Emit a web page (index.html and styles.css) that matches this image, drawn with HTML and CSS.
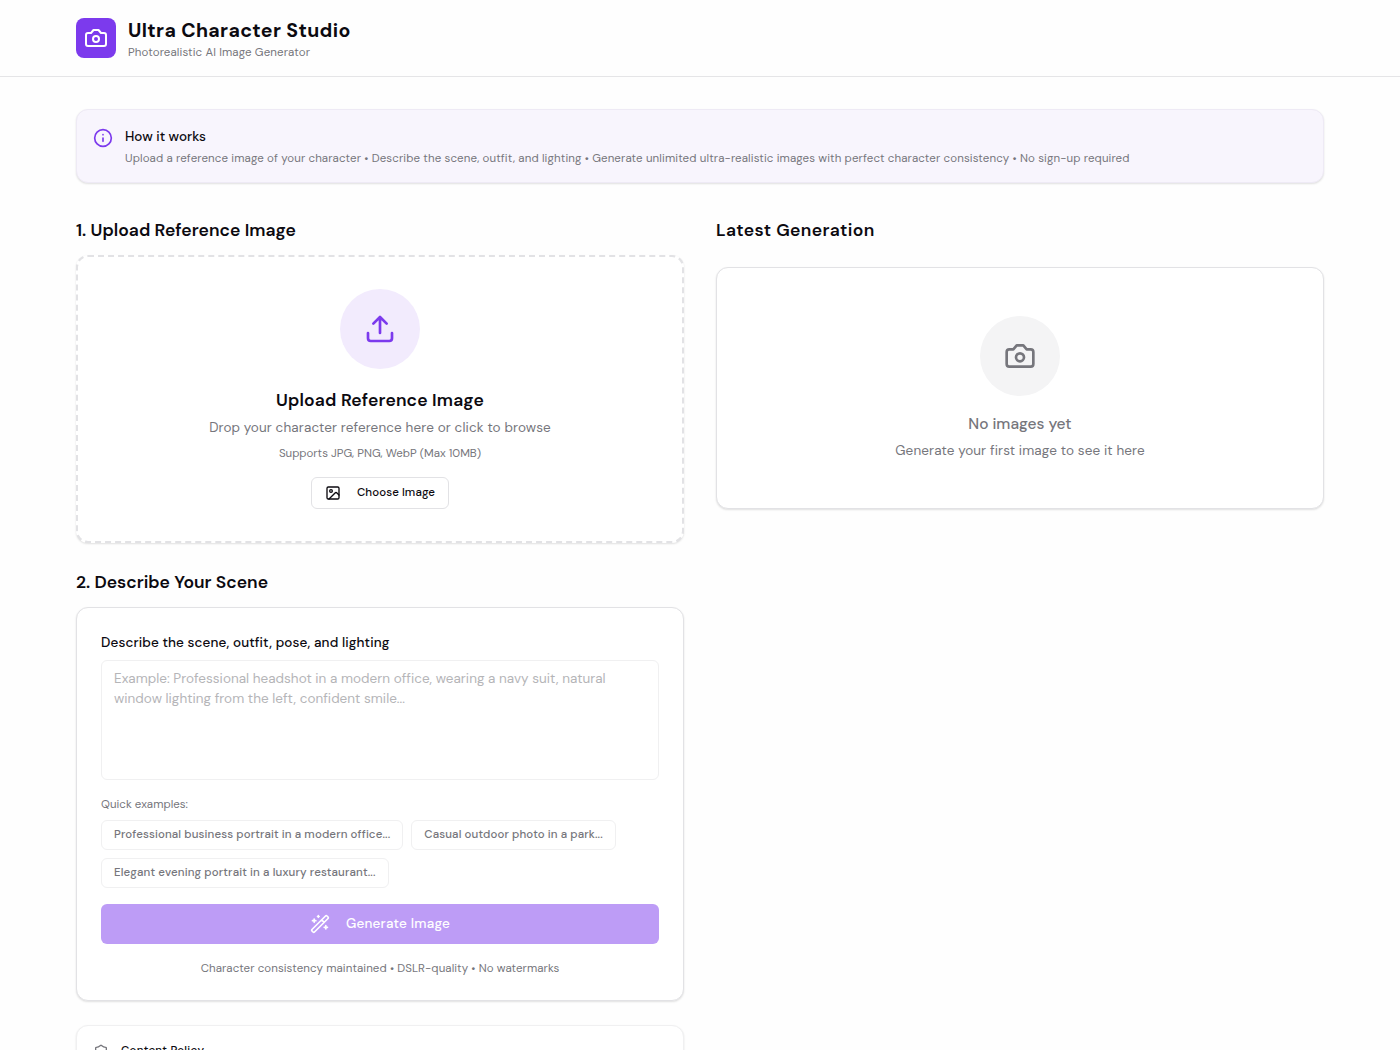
FILE: index.html
```html
<!DOCTYPE html>
<html lang="en">
<head>
<meta charset="utf-8">
<title>Ultra Character Studio</title>
<link rel="stylesheet" href="styles.css">
</head>
<body>
<header class="site-header">
  <div class="container brand">
    <div class="logo">
      <svg class="icon icon-lg" viewBox="0 0 24 24"><path d="M14.5 4h-5L7 7H4a2 2 0 0 0-2 2v9a2 2 0 0 0 2 2h16a2 2 0 0 0 2-2V9a2 2 0 0 0-2-2h-3l-2.5-3z"/><circle cx="12" cy="13" r="3"/></svg>
    </div>
    <div>
      <h1 class="brand-name"><span class="t">Ultra Character Studio</span></h1>
      <p class="small muted brand-sub"><span class="t">Photorealistic AI Image Generator</span></p>
    </div>
  </div>
</header>
<main class="container main">
  <section class="card info">
    <svg class="icon icon-md info-icon" viewBox="0 0 24 24"><circle cx="12" cy="12" r="10"/><path d="M12 16v-4M12 8h.01"/></svg>
    <div class="info-text">
      <p class="label how"><span class="t">How it works</span></p>
      <p class="small muted steps"><span class="t">Upload a reference image of your character • Describe the scene, outfit, and lighting • Generate unlimited ultra-realistic images with perfect character consistency • No sign-up required</span></p>
    </div>
  </section>
  <div class="columns">
    <div class="column">
      <section class="section">
        <h2 class="heading"><span class="t">1. Upload Reference Image</span></h2>
        <div class="card dropzone">
          <div class="circle circle-primary">
            <svg class="icon icon-xl" viewBox="0 0 24 24"><path d="M21 15v4a2 2 0 0 1-2 2H5a2 2 0 0 1-2-2v-4M17 8l-5-5-5 5M12 3v12"/></svg>
          </div>
          <h3 class="heading drop-title"><span class="t">Upload Reference Image</span></h3>
          <p class="body muted drop-hint"><span class="t">Drop your character reference here or click to browse</span></p>
          <p class="small muted formats"><span class="t">Supports JPG, PNG, WebP (Max 10MB)</span></p>
          <button class="button button-outline">
            <svg class="icon icon-sm" viewBox="0 0 24 24"><rect x="3" y="3" width="18" height="18" rx="2"/><circle cx="9" cy="9" r="2"/><path d="m21 15-3.086-3.086a2 2 0 0 0-2.828 0L6 21"/></svg>
            <span>Choose Image</span>
          </button>
        </div>
      </section>
      <section class="section">
        <h2 class="heading scene-title"><span class="t">2. Describe Your Scene</span></h2>
        <div class="card form">
          <div class="field">
            <label class="label prompt-label" for="prompt"><span class="t">Describe the scene, outfit, pose, and lighting</span></label>
            <textarea class="prompt" id="prompt" placeholder="Example: Professional headshot in a modern office, wearing a navy suit, natural window lighting from the left, confident smile..."></textarea>
          </div>
          <div class="field">
            <p class="small muted quick"><span class="t">Quick examples:</span></p>
            <div class="chips">
              <button class="chip">Professional business portrait in a modern office...</button>
              <button class="chip">Casual outdoor photo in a park...</button>
              <button class="chip chip-wide">Elegant evening portrait in a luxury restaurant...</button>
            </div>
          </div>
          <button class="button button-primary" disabled>
            <svg class="icon icon-md" viewBox="0 0 24 24"><path d="m21.64 3.64-1.28-1.28a1.21 1.21 0 0 0-1.72 0L2.36 18.64a1.21 1.21 0 0 0 0 1.72l1.28 1.28a1.2 1.2 0 0 0 1.72 0L21.64 5.36a1.2 1.2 0 0 0 0-1.72M14 7l3 3M5 6v4M19 14v4M10 2v2M7 8H3M21 16h-4M11 3H9"/></svg>
            <span>Generate Image</span>
          </button>
          <p class="small muted notes"><span class="t">Character consistency maintained • DSLR-quality • No watermarks</span></p>
        </div>
      </section>
      <section class="card policy">
        <svg class="icon icon-sm muted" viewBox="0 0 24 24"><path d="M20 13c0 5-3.500 7.500-7.660 8.950a1 1 0 0 1-.67-.01C7.500 20.500 4 18 4 13V6a1 1 0 0 1 1-1c2 0 4.500-1.200 6.240-2.720a1.170 1.170 0 0 1 1.520 0C14.510 3.810 17 5 19 5a1 1 0 0 1 1 1z"/></svg>
        <p class="small policy-title"><span class="t">Content Policy</span></p>
      </section>
    </div>
    <div class="column">
      <section class="section section-wide">
        <h2 class="heading latest"><span class="t">Latest Generation</span></h2>
        <div class="card empty">
          <div class="circle">
            <svg class="icon icon-xl" viewBox="0 0 24 24"><path d="M14.5 4h-5L7 7H4a2 2 0 0 0-2 2v9a2 2 0 0 0 2 2h16a2 2 0 0 0 2-2V9a2 2 0 0 0-2-2h-3l-2.500-3z"/><circle cx="12" cy="13" r="3"/></svg>
          </div>
          <p class="empty-title muted">No images yet</p>
          <p class="body muted first"><span class="t">Generate your first image to see it here</span></p>
        </div>
      </section>
    </div>
  </div>
</main>
</body>
</html>
```

FILE: styles.css
```css
* { box-sizing: border-box; }
body { margin: 0; height: 1050px; overflow: hidden; background: #fefefe; color: #0c0a10; font: 13.5px/20px "DM Sans", Inter, sans-serif; }
h1, h2, h3, p { margin: 0; }
button, textarea { font: inherit; color: inherit; }

.t { display: inline-block; vertical-align: top; margin: .6px 0 -.6px; }

.container { width: 1248px; margin: 0 auto; }
.site-header { border-bottom: 1px solid #e5e5e7; padding: 16px 0; }
.brand { display: flex; align-items: center; gap: 12px; }
.logo { display: flex; align-items: center; justify-content: center; width: 40px; height: 40px; border-radius: 8px; background: #7c3aed; color: #fff; }
.brand-name { font-size: 19.5px; line-height: 28px; font-weight: 700; letter-spacing: .36px; }
.small { font-size: 11.5px; line-height: 16px; letter-spacing: .12px; }
.body { font-size: 13.5px; line-height: 20px; letter-spacing: .12px; }
.muted { color: #76767c; }
.icon { flex: none; fill: none; stroke: currentColor; stroke-width: 2; stroke-linecap: round; stroke-linejoin: round; }
.icon-sm { width: 16px; height: 16px; }
.icon-md { width: 20px; height: 20px; }
.icon-lg { width: 24px; height: 24px; }
.icon-xl { width: 32px; height: 32px; }
.main { padding: 32px 0; }
.card { border: 1px solid #e2e2e5; border-radius: 12px; background: #fff; box-shadow: 0 1px 2px rgba(0,0,0,.12); }
.info { display: flex; gap: 12px; padding: 16px; margin-bottom: 32px; background: #f8f5fd; border-color: #eeeaf5; }
.info-icon { margin-top: 2px; color: #7c3aed; }
.info-text { display: flex; flex-direction: column; gap: 4px; white-space: nowrap; }
.label { font-weight: 500; }
.how { letter-spacing: .02px; }
.prompt-label { letter-spacing: .12px; }
.columns { display: grid; grid-template-columns: 1fr 1fr; gap: 32px; align-items: start; }
.column { display: flex; flex-direction: column; gap: 24px; }
.section { display: flex; flex-direction: column; gap: 12px; }
.section-wide { gap: 24px; }
.heading { font-size: 17.5px; line-height: 28px; font-weight: 600; letter-spacing: .03px; }
.drop-title { letter-spacing: .145px; }
.scene-title { letter-spacing: 0; }
.latest { letter-spacing: .38px; }
.dropzone { display: flex; flex-direction: column; align-items: center; padding: 32px; border: 2px dashed #e2e2e5; }
.circle { display: flex; align-items: center; justify-content: center; width: 80px; height: 80px; margin-bottom: 16px; border-radius: 50%; background: #f4f4f5; color: #76767c; }
.circle-primary { background: #f2ebfd; color: #7c3aed; }
.drop-hint { margin: 4px 0 8px; }
.formats { letter-spacing: 0; }
.button { display: flex; align-items: center; justify-content: center; gap: 16px; border-radius: 6px; font-weight: 500; padding: 0 12px; white-space: nowrap; }
.button-outline { width: 138px; height: 32px; margin-top: 16px; border: 1px solid #e2e2e5; background: #fff; font-size: 11.5px; letter-spacing: .1px; }
.button-primary { height: 40px; border: 0; background: #bd9cf6; color: #fff; letter-spacing: .2px; }
.form { display: flex; flex-direction: column; gap: 16px; padding: 24px; }
.field { display: flex; flex-direction: column; gap: 8px; }
.prompt { display: block; width: 100%; height: 120px; padding: 8px 12px; border: 1px solid #f0f0f1; border-radius: 6px; background: #fff; resize: none; letter-spacing: .025px; }
.prompt::placeholder { color: #b5b5b8; }
.quick { letter-spacing: .03px; }
.chips { display: flex; flex-wrap: wrap; gap: 8px; }
.chip { height: 30px; padding: 0 12px; border: 1px solid #f0f0f1; border-radius: 6px; background: #fff; color: #76767c; font-size: 11.5px; font-weight: 500; letter-spacing: .12px; }
.chip-wide { letter-spacing: .14px; }
.notes { text-align: center; letter-spacing: .08px; }
.policy { display: flex; gap: 12px; height: 74px; padding: 16px; border-color: #f0f0f1; }
.policy .icon { margin-top: 2px; }
.policy-title { font-weight: 500; letter-spacing: .25px; }
.empty { display: flex; flex-direction: column; align-items: center; padding: 48px; }
.empty-title { font-size: 15.5px; line-height: 24px; font-weight: 500; margin-bottom: 4px; }
```
